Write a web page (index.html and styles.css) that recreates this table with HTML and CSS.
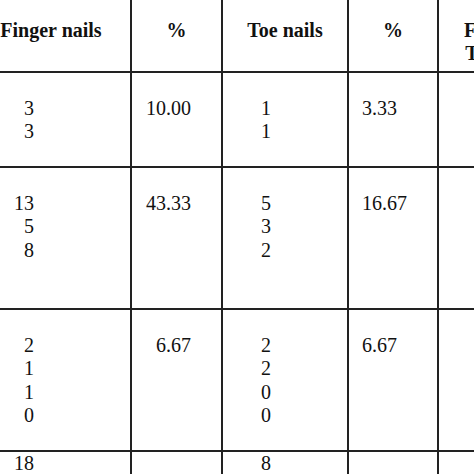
FILE: index.html
```html
<!DOCTYPE html>
<html lang="en">
<head>
<meta charset="utf-8">
<title>Nail involvement table</title>
<link rel="stylesheet" href="styles.css">
</head>
<body>
<table class="grid">
  <colgroup>
    <col class="c1"><col class="c2"><col class="c3"><col class="c4"><col class="c5">
  </colgroup>
  <thead>
    <tr class="head">
      <th>Finger nails</th>
      <th>%</th>
      <th>Toe nails</th>
      <th>%</th>
      <th>Finger &amp;<br>Toe nails</th>
    </tr>
  </thead>
  <tbody>
    <tr class="r1">
      <td class="n1">3<br>3</td>
      <td class="p2">10.00</td>
      <td class="n3">1<br>1</td>
      <td class="p4">3.33</td>
      <td></td>
    </tr>
    <tr class="r2">
      <td class="n1">13<br>5<br>8</td>
      <td class="p2">43.33</td>
      <td class="n3">5<br>3<br>2</td>
      <td class="p4">16.67</td>
      <td></td>
    </tr>
    <tr class="r3">
      <td class="n1">2<br>1<br>1<br>0</td>
      <td class="p2">6.67</td>
      <td class="n3">2<br>2<br>0<br>0</td>
      <td class="p4">6.67</td>
      <td></td>
    </tr>
    <tr class="r4">
      <td class="n1">18</td>
      <td class="p2"></td>
      <td class="n3">8</td>
      <td class="p4"></td>
      <td></td>
    </tr>
  </tbody>
</table>
</body>
</html>
```
FILE: styles.css
```css
html, body {
  margin: 0;
  padding: 0;
  overflow: hidden;
  background: #ffffff;
}

body {
  font-family: "Liberation Serif", "Times New Roman", serif;
  font-size: 20px;
  line-height: 23.4px;
  color: #111111;
}

.grid {
  border-collapse: collapse;
  table-layout: fixed;
  width: 597px;
  margin-left: -30px;
}

.c1 { width: 160px; }
.c2 { width: 91px; }
.c3 { width: 126px; }
.c4 { width: 90px; }
.c5 { width: 130px; }

.grid th,
.grid td {
  border: 2px solid #222222;
  padding: 0;
  vertical-align: top;
}

.grid th {
  border-top: none;
  font-weight: bold;
  text-align: center;
  padding-top: 19px;
}

.grid td {
  padding-top: 24px;
}

.head { height: 72px; }
.r1 { height: 95px; }
.r2 { height: 142px; }
.r3 { height: 142px; }
.r4 { height: 60px; }

.grid .r4 td { padding-top: 0; }

.grid .n1 { text-align: right; padding-right: 96px; }
.grid .p2 { text-align: right; padding-right: 30px; }
.grid .n3 { text-align: right; padding-right: 76px; }
.grid .p4 { text-align: left; padding-left: 13px; }
```
